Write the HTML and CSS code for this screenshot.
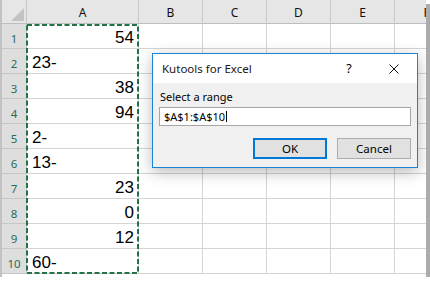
FILE: index.html
```html
<!DOCTYPE html>
<html lang="en">
<head>
    <meta charset="UTF-8">
    <title>Kutools for Excel - Select a range</title>
    <link rel="stylesheet" href="styles.css">
</head>
<body>

    <div class="window">
        <div class="sheet">
            <div class="corner">
                <svg width="13" height="13" viewBox="0 0 13 13"><polygon points="13,0 13,13 0,13" fill="#c3c3c3"/></svg>
            </div>
            <div class="col-head">A</div>
            <div class="col-head">B</div>
            <div class="col-head">C</div>
            <div class="col-head">D</div>
            <div class="col-head">E</div>
            <div class="col-head">F</div>
        </div>

        <!-- marching ants round the picked range -->
        <svg class="marquee" width="113" height="250" viewBox="0 0 113 250">
            <rect x="1" y="1" width="111" height="248" fill="none" stroke="#217346" stroke-width="2" stroke-dasharray="5 2.5"/>
        </svg>

        <div class="dialog">
            <div class="titlebar">
                <span class="title">Kutools for Excel</span>
                <span class="help">?</span>
                <span class="close">
                    <svg width="10" height="10" viewBox="0 0 10 10"><path d="M0.5 0.5 L9.5 9.5 M9.5 0.5 L0.5 9.5" stroke="#111" stroke-width="1"/></svg>
                </span>
            </div>
            <div class="dialog-body">
                <div class="label">Select a range</div>
                <div class="range-input">$A$1:$A$10<span class="caret"></span></div>
                <div class="buttons">
                    <button class="btn focused">OK</button>
                    <button class="btn">Cancel</button>
                </div>
            </div>
        </div>
    </div>

    <script>
        // column A values, text entries sit on the left like Excel does
        const values = ["54", "23-", "38", "94", "2-", "13-", "23", "0", "12", "60-"];

        function renderRows() {
            const sheet = document.querySelector(".sheet");
            values.forEach((value, index) => {
                const isText = value.endsWith("-");
                sheet.insertAdjacentHTML("beforeend", `
                    <div class="row-head">${index + 1}</div>
                    <div class="cell ${isText ? "text" : "num"}">${value}</div>
                    <div class="cell"></div>
                    <div class="cell"></div>
                    <div class="cell"></div>
                    <div class="cell"></div>
                    <div class="cell"></div>
                `);
            });
        }

        renderRows();
    </script>

</body>
</html>
```

FILE: styles.css
```css
* {
    margin: 0;
    padding: 0;
    box-sizing: border-box;
}
body {
    background-color: #fff;
    font-family: "Noto Sans", sans-serif;
    color: #000;
}
.window {
    position: relative;
    width: 426px;
    height: 277px;
    overflow: hidden;
    background-color: #fff;
    border-left: 2px solid #c2c2c2;
    box-shadow: 4px 4px 0 #acacac;
}
.sheet {
    display: grid;
    grid-template-columns: 25px 112px repeat(5, 64px);
    grid-template-rows: 24px repeat(10, 25px);
}
.corner {
    display: flex;
    align-items: flex-end;
    justify-content: flex-end;
    padding: 0 2px 2px 0;
    background-color: #e6e6e6;
    border-right: 1px solid #c6c6c6;
    border-bottom: 1px solid #bdbdbd;
}
.col-head {
    display: flex;
    align-items: center;
    justify-content: center;
    padding-top: 2px;
    font-size: 12px;
    color: #111;
    background-color: #e6e6e6;
    border-right: 1px solid #cacaca;
    border-bottom: 1px solid #bdbdbd;
}
.row-head {
    display: flex;
    align-items: flex-end;
    justify-content: center;
    padding-bottom: 2px;
    font-size: 11.5px;
    color: #2a6b57;
    background-color: #dedede;
    border-right: 1px solid #c6c6c6;
    border-bottom: 1px solid #c6c6c6;
}
.cell {
    display: flex;
    align-items: flex-end;
    padding: 0 4px 1px 5px;
    font-family: "Liberation Sans", Arial, sans-serif;
    font-size: 17px;
    line-height: 19px;
    border-right: 1px solid #d4d4d4;
    border-bottom: 1px solid #d4d4d4;
}
.cell.num {
    justify-content: flex-end;
}
.marquee {
    position: absolute;
    left: 24px;
    top: 24px;
}
.dialog {
    position: absolute;
    left: 150px;
    top: 53px;
    width: 266px;
    height: 115px;
    border: 1px solid #1883d7;
    background-color: #f0f0f0;
    box-shadow: 0 4px 14px rgba(0, 0, 0, 0.28);
    font-size: 11px;
}
.titlebar {
    display: flex;
    align-items: center;
    height: 29px;
    padding: 0 13px 0 9px;
    background-color: #fff;
}
.title {
    flex: 1;
    font-size: 11.5px;
    color: #221515;
}
.help {
    width: 20px;
    text-align: center;
    font-size: 12.5px;
}
.close {
    display: flex;
    justify-content: center;
    width: 20px;
    margin-left: 25px;
}
.dialog-body {
    padding: 6px 6px 0 6px;
}
.label {
    padding-left: 1px;
    line-height: 16px;
}
.range-input {
    display: flex;
    align-items: center;
    height: 19px;
    margin-top: 2px;
    padding-left: 4px;
    background-color: #fff;
    border: 1px solid #a6a6a6;
}
.caret {
    width: 1px;
    height: 11px;
    margin-left: 1px;
    background-color: #000;
}
.buttons {
    display: flex;
    justify-content: flex-end;
    gap: 10px;
    margin-top: 12px;
}
.btn {
    width: 74px;
    height: 21px;
    font-family: "Noto Sans", sans-serif;
    font-size: 11.5px;
    color: #000;
    background-color: #e1e1e1;
    border: 1px solid #adadad;
}
.btn.focused {
    border: 2px solid #0078d7;
}
```
